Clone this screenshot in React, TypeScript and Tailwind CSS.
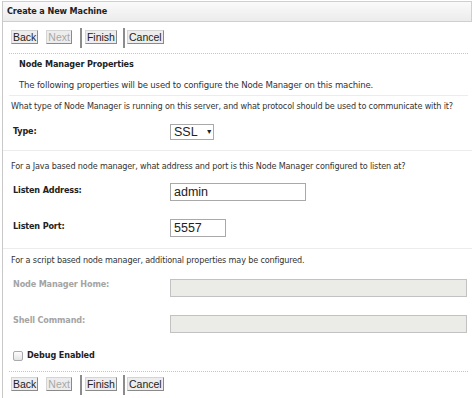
import React from "react";

function Btn({ label, disabled }: { label: string; disabled?: boolean }) {
  return (
    <button
      className={
        "h-[14px] px-[1px] border border-t-[#d4d4d4] border-l-[#d4d4d4] border-b-[#8a8a8a] border-r-[#8a8a8a] bg-[#ededed] text-[10.5px] leading-[12px] tracking-normal font-['Liberation_Sans',Arial,sans-serif] " +
        (disabled ? "text-[#a8a8a8]" : "text-[#222]")
      }
    >
      {label}
    </button>
  );
}

function ButtonRow() {
  return (
    <div className="flex items-center h-[20px]">
      <div className="ml-[8px]"><Btn label="Back" /></div>
      <div className="ml-[8px]"><Btn label="Next" disabled /></div>
      <div className="ml-[8px] w-[2px] h-[20px] bg-[#8c8c8c]" />
      <div className="ml-[3px]"><Btn label="Finish" /></div>
      <div className="ml-[6px] w-[2px] h-[20px] bg-[#8c8c8c]" />
      <div className="ml-[2px]"><Btn label="Cancel" /></div>
    </div>
  );
}

function Row({ label, children, gray, h }: { label: string; children?: React.ReactNode; gray?: boolean; h: string }) {
  return (
    <div className={"flex items-start " + h}>
      <div className={"w-[158px] pl-[10px] font-bold text-[9px] " + (gray ? "text-[#a4a4a4] mt-[1px]" : "text-[#222] mt-[4px]")}>{label}</div>
      {children}
    </div>
  );
}

export default function App() {
  return (
    <div className="w-[474px] h-[398px] bg-white overflow-hidden font-['DejaVu_Sans_Condensed','DejaVu_Sans',Tahoma,sans-serif] text-[9px] text-[#333] tracking-[-0.15px]">
      <div className="ml-[2px] h-[398px] border-l border-[#c9c9c9] relative">
        {/* header */}
        <div className="h-[21px] mt-[1px] mr-[2px] border-t border-b border-[#cfcfcf] border-r bg-gradient-to-b from-[#fafafa] to-[#ececec] flex items-center pl-[4px]">
          <span className="font-bold text-[#222] text-[9px] tracking-[-0.1px]">Create a New Machine</span>
        </div>
        <div className="h-[6px]" />
        <ButtonRow />
        <div className="mt-[5px] mx-[6px] border-t border-dotted border-[#c4c4c4]" />
        <div className="pl-[16px] h-[22px] flex items-center font-bold text-[#222] text-[9px] tracking-[-0.1px]">Node Manager Properties</div>
        <div className="pl-[16px] h-[18px] flex items-center text-[9.5px]">The following properties will be used to configure the Node Manager on this machine.</div>
        <div className="mt-[1px] mx-[6px] border-t border-[#ececec]" />
        <div className="pl-[8px] h-[18px] mt-[2px] flex items-center whitespace-nowrap">What type of Node Manager is running on this server, and what protocol should be used to communicate with it?</div>
        <div className="flex items-center h-[32px]">
          <div className="w-[158px] pl-[10px] font-bold text-[9px] text-[#222]">Type:</div>
          <div className="ml-[9px] w-[44px] h-[16px] border border-[#a9a9a9] flex items-center pl-[3px] bg-white font-['Liberation_Sans',Arial,sans-serif] text-[12.5px] text-[#222] tracking-normal">
            SSL
            <span className="ml-[8px] text-[7px]">▼</span>
          </div>
        </div>
        <div className="mt-[2px] mr-[2px] border-t border-[#ececec]" />
        <div className="pl-[8px] h-[28px] pt-[4px] flex items-center whitespace-nowrap">For a Java based node manager, what address and port is this Node Manager configured to listen at?</div>
        <Row label="Listen Address:" h="h-[23px] mt-[1px]">
          <div className="ml-[9px] mt-[3px] w-[136px] h-[18px] border border-[#a9a9a9] flex items-center pl-[3px] font-['Liberation_Sans',Arial,sans-serif] text-[12.5px] text-[#222] tracking-normal">admin</div>
        </Row>
        <Row label="Listen Port:" h="h-[23px] mt-[13px]">
          <div className="ml-[9px] mt-[3px] w-[56px] h-[18px] border border-[#a9a9a9] flex items-center pl-[3px] font-['Liberation_Sans',Arial,sans-serif] text-[12.5px] text-[#222] tracking-normal">5557</div>
        </Row>
        <div className="mt-[9px] mr-[2px] border-t border-[#ececec]" />
        <div className="pl-[8px] h-[24px] flex items-center">For a script based node manager, additional properties may be configured.</div>
        <Row label="Node Manager Home:" gray h="h-[23px] mt-[4px]">
          <div className="ml-[9px] mt-[2px] w-[297px] h-[18px] border border-[#c2c2c2] bg-[#ebebe8]" />
        </Row>
        <Row label="Shell Command:" gray h="h-[23px] mt-[13px]">
          <div className="ml-[9px] mt-[2px] w-[297px] h-[18px] border border-[#c2c2c2] bg-[#ebebe8]" />
        </Row>
        <div className="flex items-center h-[16px] mt-[12px] pl-[10px]">
          <div className="w-[10px] h-[10px] border border-[#aaa] rounded-[2px] bg-gradient-to-b from-[#fdfdfd] to-[#e4e4e4]" />
          <span className="ml-[4px] font-bold text-[#222] text-[9px] tracking-[-0.1px]">Debug Enabled</span>
        </div>
        <div className="mt-[7px] mx-[6px] border-t border-dotted border-[#c4c4c4]" />
        <div className="mt-[3px]"><ButtonRow /></div>
      </div>
    </div>
  );
}
